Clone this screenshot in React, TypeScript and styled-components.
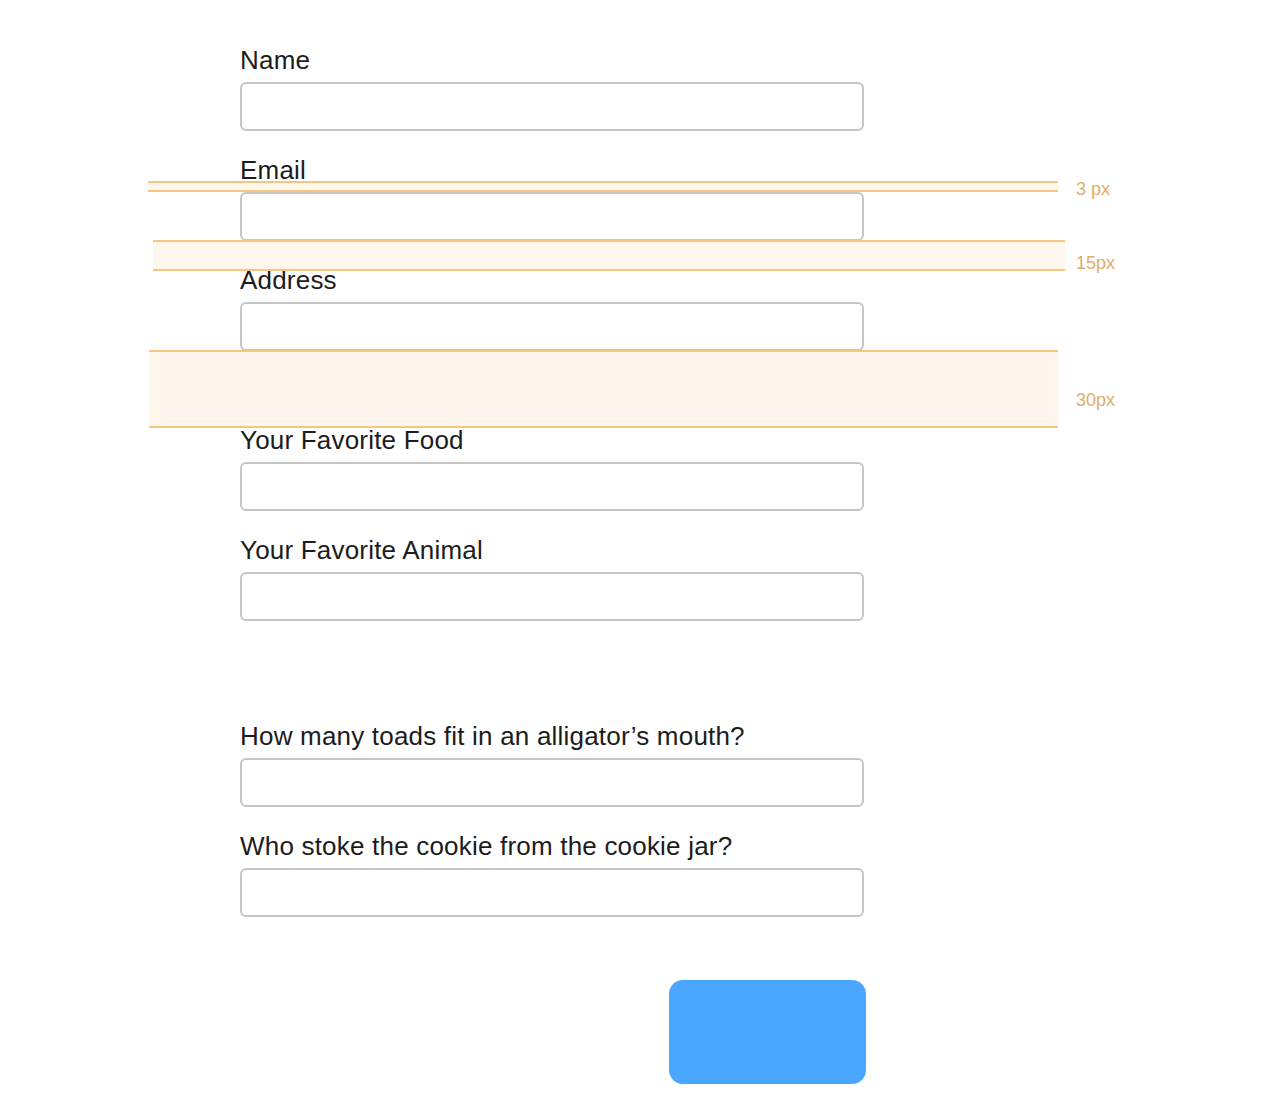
import styled, { createGlobalStyle } from "styled-components";

const GlobalStyle = createGlobalStyle`
  body {
    margin: 0;
    background: #ffffff;
    font-family: "Liberation Sans", Arial, Helvetica, sans-serif;
    color: #1c1c1c;
  }
`;

const Page = styled.div`
  position: relative;
  width: 1280px;
  min-height: 1113px;
  padding: 46px 0 0 240px;
  box-sizing: border-box;
`;

const Form = styled.form`
  width: 626px;
  display: flex;
  flex-direction: column;
  gap: 25px;
`;

const Field = styled.div<{ $extra?: number }>`
  display: flex;
  flex-direction: column;
  gap: 8px;
  margin-top: ${(p) => p.$extra ?? 0}px;
`;

const Label = styled.label`
  display: block;
  font-size: 26px;
  line-height: 28px;
  letter-spacing: 0.2px;
  white-space: nowrap;
`;

const Input = styled.input`
  width: 624px;
  height: 49px;
  box-sizing: border-box;
  border: 2px solid #c6c6c6;
  border-radius: 6px;
  background: #fff;
  padding: 0 12px;
  font-size: 20px;
  font-family: inherit;
  outline: none;
`;

const Submit = styled.button`
  align-self: flex-end;
  width: 197px;
  height: 104px;
  margin-top: 38px;
  border: none;
  border-radius: 14px;
  background: #4aa6ff;
  cursor: pointer;
`;

// spacing guides drawn over the form: a shaded band plus its size note
const GuideRow = styled.div<{ $top: number; $height: number }>`
  position: absolute;
  top: ${(p) => p.$top}px;
  left: 0;
  width: 100%;
  height: ${(p) => p.$height}px;
  display: grid;
  grid-template-columns: 1076px auto;
  grid-template-rows: ${(p) => p.$height}px;
  align-items: center;
  pointer-events: none;
`;

const Band = styled.div<{ $start: number; $end: number }>`
  align-self: stretch;
  margin-left: ${(p) => p.$start}px;
  margin-right: ${(p) => 1076 - p.$end}px;
  box-sizing: border-box;
  border-top: 2px solid #f3c77f;
  border-bottom: 2px solid #f3c77f;
  background: rgba(255, 236, 214, 0.45);
`;

const Note = styled.span<{ $shift: number }>`
  font-size: 18px;
  line-height: 20px;
  color: #dcae6a;
  transform: translateY(${(p) => p.$shift}px);
`;

const fields = [
  { label: "Name" },
  { label: "Email" },
  { label: "Address" },
  { label: "Your Favorite Food", extra: 50 },
  { label: "Your Favorite Animal" },
  { label: "How many toads fit in an alligator\u2019s mouth?", extra: 76 },
  { label: "Who stoke the cookie from the cookie jar?" },
];

const guides = [
  { top: 181, height: 11, start: 148, end: 1058, note: "3 px", shift: 2 },
  { top: 240, height: 31, start: 153, end: 1065, note: "15px", shift: 7 },
  { top: 350, height: 78, start: 149, end: 1058, note: "30px", shift: 11 },
];

export default function App() {
  return (
    <>
      <GlobalStyle />
      <Page>
        <Form onSubmit={(e) => e.preventDefault()}>
          {fields.map((f) => (
            <Field key={f.label} $extra={f.extra}>
              <Label>{f.label}</Label>
              <Input type="text" />
            </Field>
          ))}
          <Submit type="submit" />
        </Form>

        {guides.map((g) => (
          <GuideRow key={g.note} $top={g.top} $height={g.height}>
            <Band $start={g.start} $end={g.end} />
            <Note $shift={g.shift}>{g.note}</Note>
          </GuideRow>
        ))}
      </Page>
    </>
  );
}
